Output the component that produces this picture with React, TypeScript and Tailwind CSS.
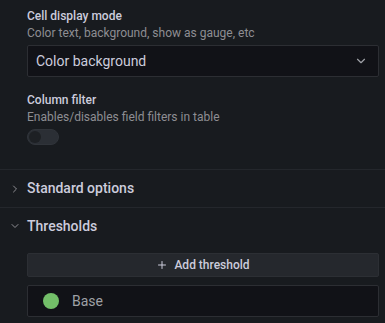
import React from "react";
import { ChevronDown, ChevronRight, Plus } from "lucide-react";

const font = { fontFamily: "Roboto, 'Liberation Sans', sans-serif" };

const Field: React.FC<{ label: string; description: string; children: React.ReactNode; className?: string }> = ({
  label,
  description,
  children,
  className,
}) => (
  <div className={className}>
    <div className="text-[12px] leading-[18px] font-medium text-[#ccccdc]">{label}</div>
    <div className="text-[12px] leading-[16px] text-[#8e8e93]">{description}</div>
    {children}
  </div>
);

export default function App() {
  return (
    <div style={font} className="w-full h-[323px] overflow-hidden bg-[#181b1f]">
      <div className="pl-[27px] pr-[6px] pt-[7px] pb-[24px]">
        <Field label="Cell display mode" description="Color text, background, show as gauge, etc">
          <div className="mt-[4px] h-[32px] flex items-center justify-between rounded-[2px] border border-[#2c2e33] bg-[#111217] pl-[8px] pr-[10px]">
            <span className="text-[14px] text-[#ccccdc]">Color background</span>
            <ChevronDown size={14} strokeWidth={2} className="text-[#9fa1a6]" />
          </div>
        </Field>
        <Field className="mt-[14px]" label="Column filter" description="Enables/disables field filters in table">
          <div className="mt-[4px] w-[32px] h-[16px] rounded-full bg-[#2b2f35] border border-[#30343a] flex items-center pl-[1px]">
            <div className="w-[12px] h-[12px] rounded-full bg-[#1d2024]" />
          </div>
        </Field>
      </div>

      <div className="border-t border-[#24272c]">
        <div className="h-[37px] flex items-center">
          <div className="w-[27px] flex justify-center pl-[2px]">
            <ChevronRight size={12} strokeWidth={2} className="text-[#8e8e93]" />
          </div>
          <span className="text-[14px] font-medium text-[#ccccdc]">Standard options</span>
        </div>
      </div>

      <div className="border-t border-[#24272c]">
        <div className="h-[36px] flex items-center">
          <div className="w-[27px] flex justify-center pl-[2px]">
            <ChevronDown size={12} strokeWidth={2} className="text-[#8e8e93]" />
          </div>
          <span className="text-[14px] font-medium text-[#ccccdc]">Thresholds</span>
        </div>
        <div className="pl-[27px] pr-[6px] pt-[9px] flex flex-col gap-[8px]">
          <div className="h-[24px] flex items-center justify-center gap-[6px] rounded-[2px] bg-[#25282d] border border-[#2c2f34]">
            <Plus size={12} strokeWidth={2} className="text-[#ccccdc]" />
            <span className="text-[12px] font-medium text-[#ccccdc]">Add threshold</span>
          </div>
          <div className="h-[32px] flex items-center rounded-[2px] border border-[#2c2e33] bg-[#111217] pl-[15px]">
            <div className="w-[16px] h-[16px] rounded-full bg-[#73bf69]" />
            <span className="ml-[13px] text-[14px] text-[#9fa1a6]">Base</span>
          </div>
        </div>
      </div>
    </div>
  );
}
